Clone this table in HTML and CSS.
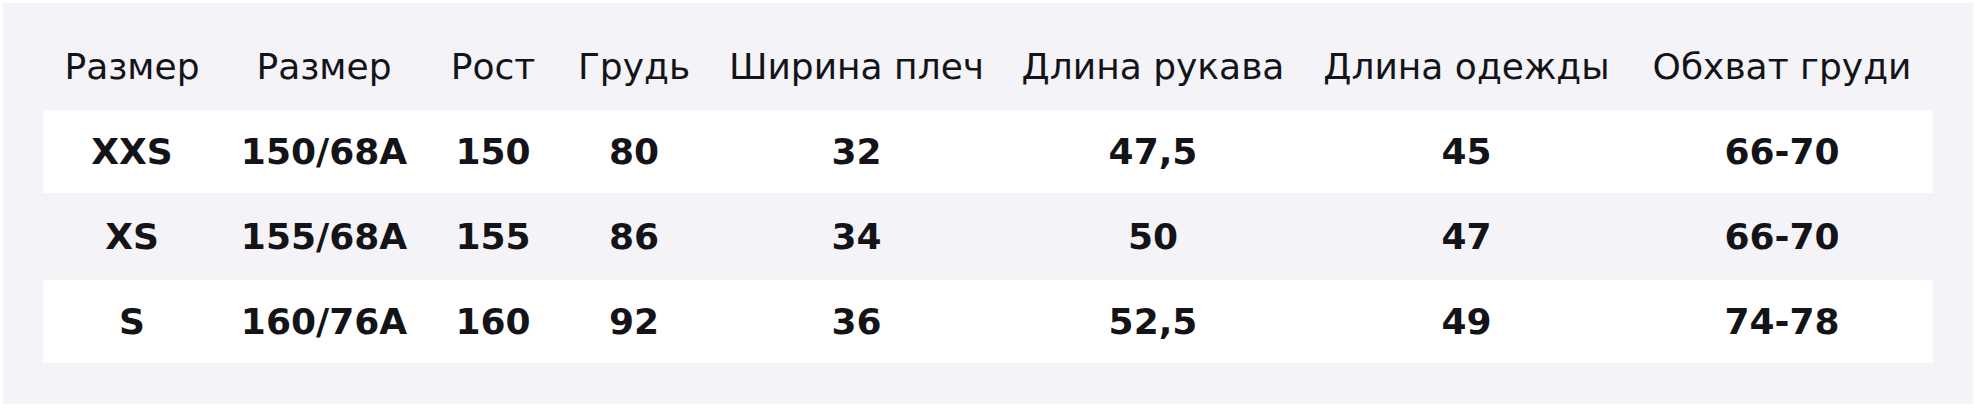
FILE: index.html
```html
<!DOCTYPE html>
<html lang="ru">
<head>
<meta charset="utf-8">
<title>Таблица размеров</title>
<link rel="stylesheet" href="styles.css">
</head>
<body>
<div class="size-chart">
  <table class="size-table">
    <colgroup>
      <col class="c1"><col class="c2"><col class="c3"><col class="c4">
      <col class="c5"><col class="c6"><col class="c7"><col class="c8">
    </colgroup>
    <thead>
      <tr>
        <th>Размер</th><th>Размер</th><th>Рост</th><th>Грудь</th>
        <th>Ширина плеч</th><th>Длина рукава</th><th>Длина одежды</th><th>Обхват груди</th>
      </tr>
    </thead>
    <tbody>
      <tr class="row-odd">
        <td>XXS</td><td>150/68A</td><td>150</td><td>80</td><td>32</td><td>47,5</td><td>45</td><td>66-70</td>
      </tr>
      <tr class="row-even">
        <td>XS</td><td>155/68A</td><td>155</td><td>86</td><td>34</td><td>50</td><td>47</td><td>66-70</td>
      </tr>
      <tr class="row-odd">
        <td>S</td><td>160/76A</td><td>160</td><td>92</td><td>36</td><td>52,5</td><td>49</td><td>74-78</td>
      </tr>
    </tbody>
  </table>
</div>
</body>
</html>
```
FILE: styles.css
```css
html, body {
  margin: 0;
  padding: 0;
  background: #ffffff;
}

body {
  padding: 3px;
  font-family: "DejaVu Sans", "Noto Sans", sans-serif;
  color: #141418;
}

.size-chart {
  background: #f3f3f8;
  padding: 20px 40px 41px;
}

.size-table {
  width: 1890px;
  border-collapse: collapse;
  table-layout: fixed;
}

.c1 { width: 178px; }
.c2 { width: 206px; }
.c3 { width: 132px; }
.c4 { width: 150px; }
.c5 { width: 295px; }
.c6 { width: 298px; }
.c7 { width: 329px; }
.c8 { width: 302px; }

.size-table th,
.size-table td {
  padding: 0;
  text-align: center;
  vertical-align: middle;
  white-space: nowrap;
  font-size: 36px;
  line-height: 42px;
}

.size-table th {
  font-weight: normal;
  height: 87px;
}

.size-table td {
  font-weight: bold;
}

.row-odd {
  background: #ffffff;
  height: 83px;
}

.row-even {
  background: transparent;
  height: 87px;
}
```
